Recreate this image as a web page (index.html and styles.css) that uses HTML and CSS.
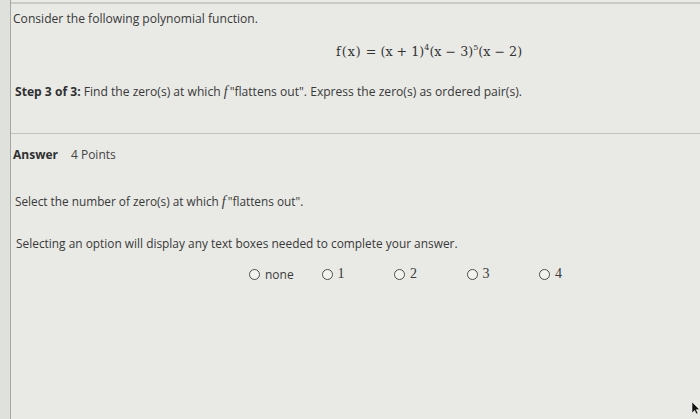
FILE: index.html
```html
<!DOCTYPE html>
<html lang="en">
<head>
<meta charset="utf-8">
<title>Polynomial question</title>
<link rel="stylesheet" href="styles.css">
</head>
<body>
<div class="page">
  <div class="strip"></div>
  <div class="main">
    <div class="topbar"></div>
    <section class="question">
      <p class="intro">Consider the following polynomial function.</p>
      <p class="formula">f<span class="paren">(</span>x<span class="paren">)</span> = (x + 1)<sup>4</sup>(x − 3)<sup>5</sup>(x − 2)</p>
      <p class="step"><b>Step 3 of 3:</b> Find the zero(s) at which <i class="fn">f</i>"flattens out". Express the zero(s) as ordered pair(s).</p>
    </section>
    <section class="answer">
      <p class="answer-head"><b>Answer</b><span class="points">4 Points</span></p>
      <p class="select">Select the number of zero(s) at which <i class="fn">f</i>"flattens out".</p>
      <p class="selecting">Selecting an option will display any text boxes needed to complete your answer.</p>
      <div class="options">
        <label class="opt"><span class="radio"></span><span class="word">none</span></label>
        <label class="opt"><span class="radio"></span><span class="num">1</span></label>
        <label class="opt"><span class="radio"></span><span class="num">2</span></label>
        <label class="opt"><span class="radio"></span><span class="num">3</span></label>
        <label class="opt"><span class="radio"></span><span class="num">4</span></label>
      </div>
    </section>
  </div>
  <svg class="cursor" width="9" height="14" viewBox="0 0 9 14"><path d="M1 1 L1 12 L3.6 9.4 L5.4 13 L7 12.2 L5.3 8.7 L8.6 8.6 Z" fill="#111" stroke="#eee" stroke-width="0.6"/></svg>
</div>
</body>
</html>
```
FILE: styles.css
```css
html, body {
  margin: 0;
  padding: 0;
}
body {
  width: 700px;
  height: 419px;
  overflow: hidden;
  background: #e9eae6;
  font-family: "Open Sans", "Liberation Sans", sans-serif;
  color: #383938;
}
.page {
  position: relative;
  display: flex;
  height: 419px;
}
.strip {
  width: 10px;
  flex: none;
  background: #dfe1dd;
  border-right: 1px solid #a4a7a3;
}
.main {
  flex: 1;
  display: flex;
  flex-direction: column;
}
.topbar {
  height: 2px;
  margin-top: 2px;
  background: #c9cbc7;
}
p {
  margin: 0;
}
.question {
  padding: 0 0 32px 2px;
  border-bottom: 1px solid #bfc2be;
}
.intro {
  margin-top: 6px;
  font-size: 12.1px;
  line-height: 18px;
}
.formula {
  margin-top: 14px;
  padding-left: 323px;
  font-family: "DejaVu Serif", "Liberation Serif", serif;
  font-size: 12.7px;
  line-height: 20px;
  color: #333;
}
.formula sup {
  font-size: 8px;
  vertical-align: 6px;
  line-height: 0;
}
.paren {
  margin: 0 1px;
}
.step {
  margin-top: 21px;
  padding-left: 2px;
  font-size: 12.1px;
  line-height: 18px;
}
.step b {
  font-weight: 700;
  color: #2f3030;
}
.fn {
  font-family: "Liberation Serif", serif;
  font-style: italic;
  font-size: 14px;
  margin-right: 2px;
}
.answer {
  padding-left: 2px;
}
.answer-head {
  margin-top: 12px;
  font-size: 12px;
  line-height: 18px;
}
.answer-head b {
  color: #2f3030;
}
.points {
  margin-left: 13px;
  color: #444;
}
.select {
  margin-top: 28px;
  padding-left: 2px;
  font-size: 11.8px;
  line-height: 18px;
}
.selecting {
  margin-top: 23px;
  padding-left: 3px;
  font-size: 11.9px;
  line-height: 18px;
}
.options {
  margin-top: 13px;
  padding-left: 236px;
  display: flex;
  height: 18px;
  align-items: center;
}
.opt {
  width: 72.5px;
  display: flex;
  align-items: center;
  gap: 5px;
}
.radio {
  width: 9px;
  height: 9px;
  border: 1px solid #4d4f4e;
  border-radius: 50%;
  background: #f2f3ef;
  flex: none;
}
.word {
  font-size: 12px;
}
.num {
  font-family: "Liberation Serif", serif;
  font-size: 14px;
}
.cursor {
  position: absolute;
  right: 0;
  bottom: 4px;
}
```
